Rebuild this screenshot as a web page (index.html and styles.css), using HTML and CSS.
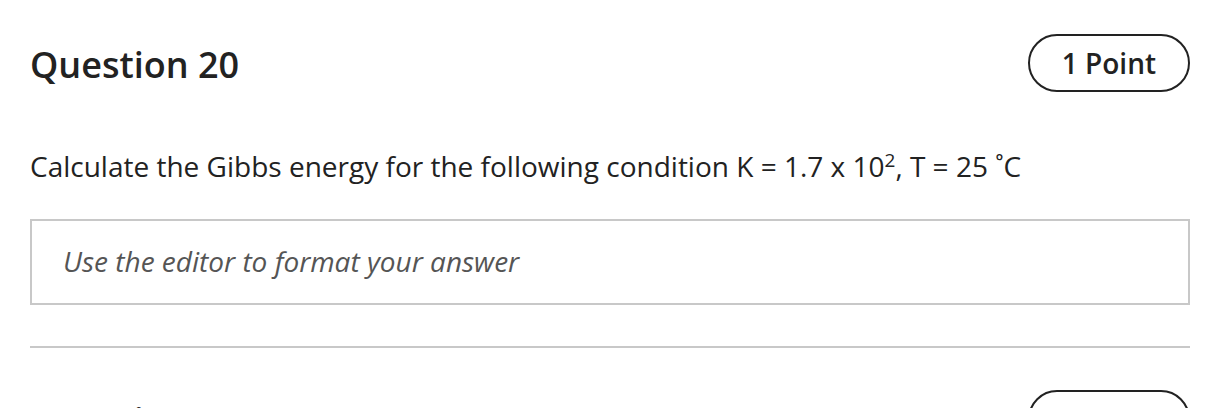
FILE: index.html
```html
<!DOCTYPE html>
<html lang="en">

<head>
    <meta charset="UTF-8">
    <meta name="viewport" content="width=device-width, initial-scale=1.0">
    <title>Quiz</title>
    <link rel="stylesheet" href="styles.css">
</head>

<body>
    <div class="quiz">
        <div class="question">
            <div class="question-header">
                <h2>Question 20</h2>
                <span class="points">1 Point</span>
            </div>
            <p class="question-text">Calculate the Gibbs energy for the following condition K = 1.7 x 10<sup>2</sup>, T = 25 ˚C</p>
            <div class="answer-box">
                <span class="placeholder">Use the editor to format your answer</span>
            </div>
        </div>

        <hr class="divider">

        <div class="question">
            <div class="question-header">
                <h2>Question 21</h2>
                <span class="points">1 Point</span>
            </div>
        </div>
    </div>
</body>

</html>
```

FILE: styles.css
```css
body {
    font-family: "Open Sans", Arial, sans-serif;
    margin: 0;
    padding: 0;
    background-color: #fff;
    color: #222;
}

.quiz {
    width: 1160px;
    padding: 34px 0 0 30px;
}

.question-header {
    display: flex;
    justify-content: space-between;
    align-items: center;
    height: 58px;
}

.question-header h2 {
    margin: 4px 0 0;
    font-size: 36px;
    font-weight: 600;
    line-height: 44px;
}

.points {
    border: 2px solid #222;
    border-radius: 30px;
    padding: 0 32px;
    font-size: 28px;
    font-weight: 600;
    line-height: 54px;
}

.question-text {
    margin: 54px 0 33px;
    font-size: 28px;
    line-height: 40px;
}

.question-text sup {
    font-size: 19px;
    line-height: 0;
}

.answer-box {
    border: 2px solid #c8c8c8;
    padding: 20px 31px 22px;
    font-size: 28px;
    line-height: 40px;
}

.placeholder {
    font-style: italic;
    color: #555;
}

.divider {
    margin: 41px 0 42px;
    border: none;
    border-top: 2px solid #c8c8c8;
}
```
